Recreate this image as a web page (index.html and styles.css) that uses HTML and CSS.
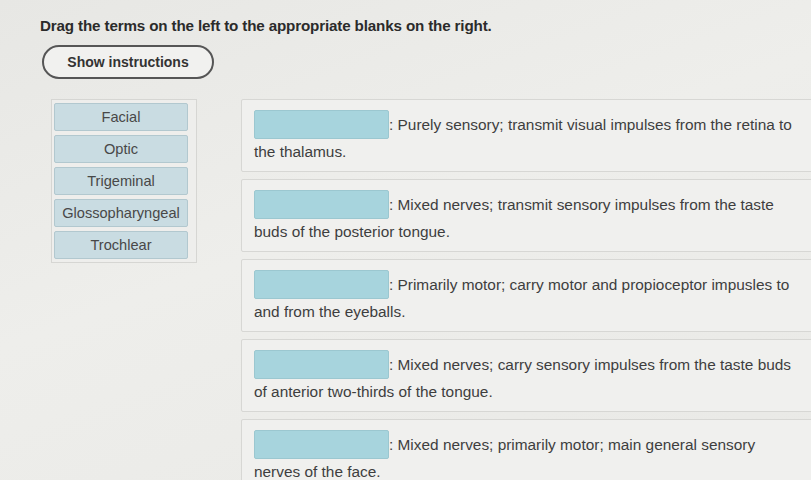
FILE: index.html
```html
<!DOCTYPE html>
<html lang="en">
<head>
    <meta charset="UTF-8">
    <meta name="viewport" content="width=device-width, initial-scale=1.0">
    <link rel="stylesheet" href="styles.css">
    <title>Cranial Nerves</title>
</head>
<body>
    <div class="page">
        <p class="title">Drag the terms on the left to the appropriate blanks on the right.</p>
        <button class="show-btn">Show instructions</button>

        <div class="content">
            <div class="terms">
                <div class="term">Facial</div>
                <div class="term">Optic</div>
                <div class="term">Trigeminal</div>
                <div class="term">Glossopharyngeal</div>
                <div class="term">Trochlear</div>
            </div>

            <div class="cards">
                <div class="card"><span class="blank"></span>: Purely sensory; transmit visual impulses from the retina to<br>the thalamus.</div>
                <div class="card"><span class="blank"></span>: Mixed nerves; transmit sensory impulses from the taste<br>buds of the posterior tongue.</div>
                <div class="card"><span class="blank"></span>: Primarily motor; carry motor and propioceptor impusles to<br>and from the eyeballs.</div>
                <div class="card"><span class="blank"></span>: Mixed nerves; carry sensory impulses from the taste buds<br>of anterior two-thirds of the tongue.</div>
                <div class="card"><span class="blank"></span>: Mixed nerves; primarily motor; main general sensory<br>nerves of the face.</div>
            </div>
        </div>
    </div>
</body>
</html>
```

FILE: styles.css
```css
html, body {
    height: 100%;
}

body {
    margin: 0;
    overflow: hidden;
    font-family: "Liberation Sans", Arial, sans-serif;
    color: #3d3d3d;
    background: linear-gradient(160deg, #e7e7e4 0%, #eeeeeb 45%, #e9e9e6 100%);
}

.page {
    padding: 17px 0 0 40px;
}

.title {
    margin: 0 0 11px;
    font-size: 15.2px;
    font-weight: bold;
    line-height: 17px;
    letter-spacing: -0.15px;
    color: #2b2b2b;
}

.show-btn {
    display: block;
    margin-left: 2px;
    width: 172px;
    height: 34px;
    border: 2px solid #565656;
    border-radius: 17px;
    background: #f1f1ef;
    font-family: inherit;
    font-size: 14px;
    font-weight: bold;
    color: #333;
}

.content {
    display: flex;
    align-items: flex-start;
    gap: 44px;
    margin: 20px 0 0 11px;
}

.terms {
    display: flex;
    flex-direction: column;
    flex-shrink: 0;
    gap: 4px;
    width: 134px;
    padding: 3px 8px 3px 2px;
    border: 1px solid #d6d6d3;
    background: #eeeeec;
}

.term {
    height: 26px;
    line-height: 26px;
    text-align: center;
    font-size: 14.6px;
    color: #484848;
    background: #c9dce2;
    border: 1px solid #b2c8cf;
    border-radius: 2px;
    white-space: nowrap;
}

.cards {
    display: flex;
    flex-direction: column;
    gap: 7px;
    flex-shrink: 0;
}

.card {
    box-sizing: border-box;
    width: 580px;
    height: 73px;
    padding: 10px 12px 0;
    border: 1px solid #d7d7d4;
    border-radius: 2px;
    background: #f0f0ee;
    font-size: 15.4px;
    line-height: 26px;
    color: #3e3e3e;
    white-space: nowrap;
}

.blank {
    display: inline-block;
    width: 135px;
    height: 29px;
    vertical-align: -9px;
    background: #a7d4dd;
    border: 1px solid #9bc7d0;
    border-radius: 2px;
    box-sizing: border-box;
}
```
